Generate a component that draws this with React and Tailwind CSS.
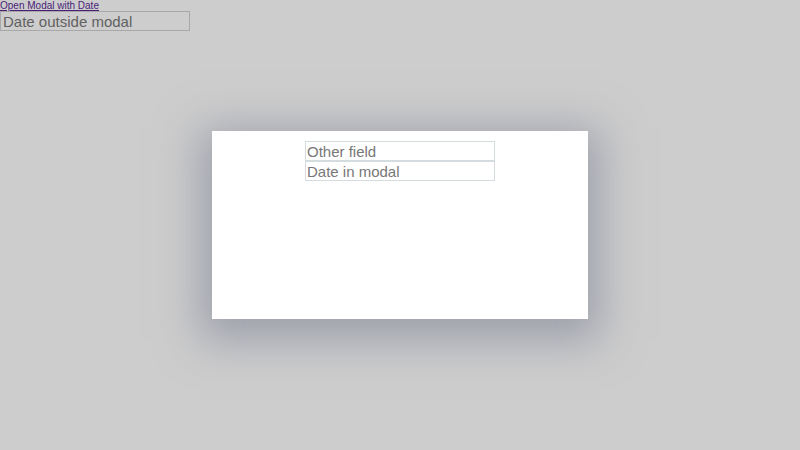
export default function App() {
  return (
    <div className="relative w-[800px] h-[450px] bg-[#cdcdcd] overflow-hidden" style={{ fontFamily: '"Liberation Sans", Arial, sans-serif' }}>
      {/* page content under the overlay */}
      <div className="flex flex-col items-start">
        <a href="#" className="text-[10px] leading-[11px] text-[#4a1d78] underline">Open Modal with Date</a>
        <input
          placeholder="Date outside modal"
          className="w-[190px] h-[20px] px-[2px] border border-[#a8a8a8] bg-transparent text-[15px] leading-[18px] text-[#616161] placeholder:text-[#616161] outline-none"
        />
      </div>

      {/* modal */}
      <div className="absolute left-[212px] top-[131px] w-[376px] h-[188px] bg-white shadow-[0_10px_40px_12px_rgba(120,125,145,0.55)] flex flex-col items-center pt-[10px]">
        <input
          placeholder="Other field"
          className="w-[190px] h-[20px] px-[1px] border border-[#d5dcdf] bg-white text-[15px] leading-[18px] placeholder:text-[#777777] outline-none"
        />
        <input
          placeholder="Date in modal"
          className="w-[190px] h-[20px] px-[1px] border border-[#d5dcdf] bg-white text-[15px] leading-[18px] placeholder:text-[#777777] outline-none"
        />
      </div>
    </div>
  )
}
